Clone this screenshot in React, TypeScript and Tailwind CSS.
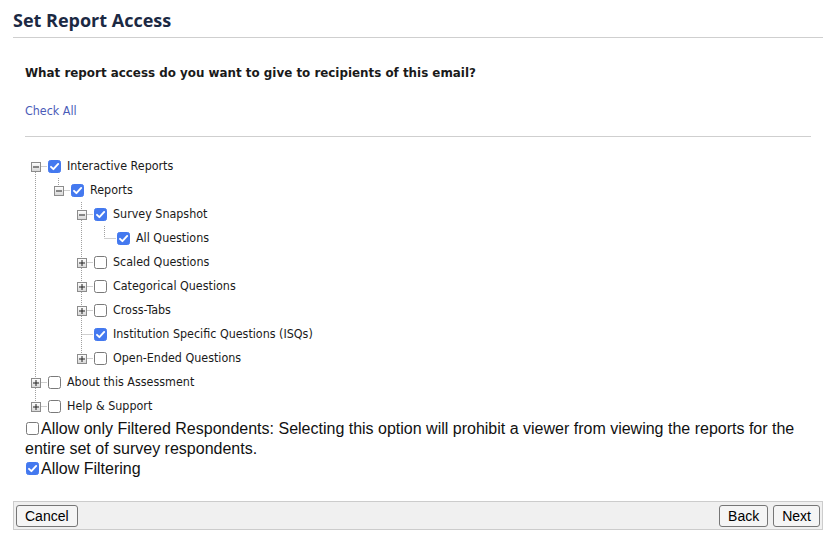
import { useState } from "react";

type Node = {
    label: string;
    checked?: boolean;
    open?: boolean;
    children?: Node[];
    hasKids?: boolean;
};

const tree: Node[] = [
    {
        label: "Interactive Reports",
        checked: true,
        open: true,
        children: [
            {
                label: "Reports",
                checked: true,
                open: true,
                children: [
                    {
                        label: "Survey Snapshot",
                        checked: true,
                        open: true,
                        children: [{ label: "All Questions", checked: true }],
                    },
                    { label: "Scaled Questions", hasKids: true },
                    { label: "Categorical Questions", hasKids: true },
                    { label: "Cross-Tabs", hasKids: true },
                    { label: "Institution Specific Questions (ISQs)", checked: true },
                    { label: "Open-Ended Questions", hasKids: true },
                ],
            },
        ],
    },
    { label: "About this Assessment", hasKids: true },
    { label: "Help & Support", hasKids: true },
];

const LINE = "#a0a0a0";

// checkbox drawn by hand so it looks like the desktop Chrome one
const Check = ({ initial, className = "" }: { initial?: boolean; className?: string }) => {
    const [on, setOn] = useState(!!initial);
    return (
        <span className={`relative inline-block w-[13px] h-[13px] shrink-0 ${className}`}>
            <input
                type="checkbox"
                checked={on}
                onChange={() => setOn(!on)}
                className="appearance-none block m-0 w-[13px] h-[13px] rounded-[2.5px] border border-[#7a7a7a] bg-white checked:bg-[#4479ef] checked:border-[#4479ef] cursor-pointer"
            />
            {on && (
                <svg viewBox="0 0 13 13" className="absolute inset-0 w-[13px] h-[13px] pointer-events-none">
                    <path d="M3 6.8 L5.4 9.2 L10.2 3.9" fill="none" stroke="#fff" strokeWidth="1.9" strokeLinecap="round" strokeLinejoin="round" />
                </svg>
            )}
        </span>
    );
};

// one 23x24 cell of the tree: guide line, elbow, and the +/- box
const Cell = ({ up, down, elbow, box }: { up?: boolean; down?: boolean; elbow?: boolean; box?: "plus" | "minus" }) => (
    <svg width="23" height="24" className="shrink-0 block">
        <defs>
            <linearGradient id="exp" x1="0" y1="0" x2="0" y2="1">
                <stop offset="0" stopColor="#ffffff" />
                <stop offset="1" stopColor="#d6d6d6" />
            </linearGradient>
        </defs>
        {up && <line x1="11.5" y1="0" x2="11.5" y2="12" stroke={LINE} strokeDasharray="1 1" />}
        {down && <line x1="11.5" y1="12" x2="11.5" y2="24" stroke={LINE} strokeDasharray="1 1" />}
        {elbow && <line x1="11.5" y1="12.5" x2="23" y2="12.5" stroke={LINE} strokeDasharray="1 1" />}
        {box && (
            <g>
                <rect x="7.5" y="8.5" width="9" height="9" fill="url(#exp)" stroke="#8c8c8c" />
                <line x1="9" y1="13" x2="15" y2="13" stroke="#222" />
                {box === "plus" && <line x1="12" y1="10" x2="12" y2="16" stroke="#222" />}
            </g>
        )}
    </svg>
);

type Row = { node: Node; depth: number; guides: boolean[]; first: boolean; last: boolean };

const flatten = (nodes: Node[], depth: number, guides: boolean[], out: Row[]) => {
    nodes.forEach((n, i) => {
        const last = i === nodes.length - 1;
        out.push({ node: n, depth, guides, first: depth === 0 && i === 0, last });
        if (n.open && n.children) flatten(n.children, depth + 1, [...guides, !last], out);
    });
    return out;
};

const TreeRow = ({ row }: { row: Row }) => {
    const n = row.node;
    const box = n.open ? "minus" : n.hasKids ? "plus" : undefined;
    return (
        <div className="flex items-center h-[24px]">
            {row.guides.map((g, i) => (
                <Cell key={i} up={g} down={g} />
            ))}
            <Cell up={!row.first} down={!row.last} elbow box={box} />
            <Check initial={n.checked} className="ml-[1px]" />
            <span className="ml-[6px] text-[12.4px] text-[#1a1a1a] font-['DejaVu_Sans_Condensed','DejaVu_Sans',sans-serif]">
                {n.label}
            </span>
        </div>
    );
};

export default function App() {
    const rows = flatten(tree, 0, [], []);
    return (
        <div className="pl-[13px] pr-[9px] pt-[9px] bg-white min-h-[538px] font-['Liberation_Sans',Arial,sans-serif]">
            <h1 className="text-[18px] leading-[22px] font-bold text-[#1b2943] pb-[6px] border-b border-[#cfcfcf] font-['Open_Sans',sans-serif]">
                Set Report Access
            </h1>
            <div className="px-[12px]">
                <p className="mt-[27px] text-[11.9px] leading-[16px] font-bold text-[#1a1a1a] font-['DejaVu_Sans',sans-serif]">
                    What report access do you want to give to recipients of this email?
                </p>
                <a href="#" className="inline-block mt-[22px] text-[12.4px] leading-[16px] text-[#4a5bb8] font-['DejaVu_Sans_Condensed','DejaVu_Sans',sans-serif]">
                    Check All
                </a>
                <div className="mt-[14px] border-t border-[#cfcfcf]" />
                <div className="mt-[17px] -ml-[1px]">
                    {rows.map((r, i) => (
                        <TreeRow key={i} row={r} />
                    ))}
                </div>
                <div className="mt-[1px] text-[16px] leading-[20px] text-[#111]">
                    <label className="block">
                        <Check className="ml-[1px] mr-[2px] align-[-1px]" />
                        Allow only Filtered Respondents: Selecting this option will prohibit a viewer from viewing the reports for the entire set of survey respondents.
                    </label>
                    <label className="block leading-[19px]">
                        <Check initial className="ml-[1px] mr-[2px] align-[-1px]" />
                        Allow Filtering
                    </label>
                </div>
            </div>
            <div className="mt-[23px] h-[29px] flex items-center justify-between px-[2px] bg-[#f0f0f0] border border-[#cccccc]">
                <button className="h-[22px] px-[8px] text-[14px] leading-[20px] text-black bg-[#f5f5f5] border border-[#767676] rounded-[3px]">
                    Cancel
                </button>
                <div className="flex gap-[5px]">
                    <button className="h-[22px] px-[8px] text-[14px] leading-[20px] text-black bg-[#f5f5f5] border border-[#767676] rounded-[3px]">
                        Back
                    </button>
                    <button className="h-[22px] px-[8px] text-[14px] leading-[20px] text-black bg-[#f5f5f5] border border-[#767676] rounded-[3px]">
                        Next
                    </button>
                </div>
            </div>
        </div>
    );
}
